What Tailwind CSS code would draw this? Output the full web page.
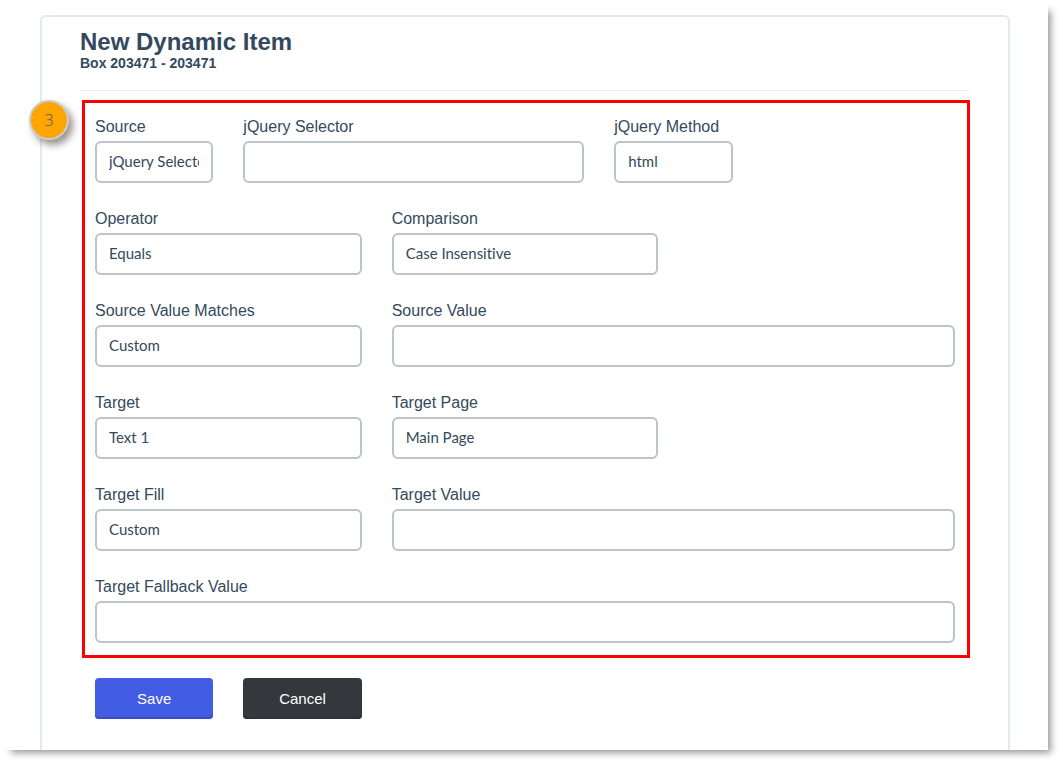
<!DOCTYPE html>
<html lang="en">
<head>
  <meta charset="UTF-8" />
  <meta name="viewport" content="width=device-width, initial-scale=1.0" />
  <title>New Dynamic Item</title>
  <script src="https://cdn.jsdelivr.net/npm/@tailwindcss/browser@4"></script>
</head>
<body class="bg-white min-h-screen flex pr-[15px] pb-[15px] text-[#34495e] font-['Liberation_Sans',Arial,sans-serif]">
  <main class="grow flex bg-white pt-[15px] pl-10 pr-[38px] shadow-[7px_7px_7px_-4px_rgba(0,0,0,0.4)]">
    <div class="grow border-2 border-b-0 border-[#e4e9e9] rounded-t-md px-[38px] pt-3 pb-6">

      <!-- Title -->
      <header class="border-b border-[#eceeee] pb-[18px]">
        <h1 class="text-2xl leading-[26px] font-bold">New Dynamic Item</h1>
        <h2 class="text-sm leading-[17px] font-bold">Box 203471 - 203471</h2>
      </header>

      <form>
        <div class="relative mt-[9px] ml-[2px] border-3 border-[#ff0000] py-3 pl-[10px] pr-3">
          <!-- Step number -->
          <span class="absolute -left-14 -top-[3px] size-10 rounded-full border-2 border-[#cccccc] bg-[#ffa500] flex items-center justify-center text-base font-light text-[#555555] font-['Open_Sans',sans-serif] shadow-[4px_5px_7px_rgba(60,40,40,0.5)]">3</span>

          <div class="grid grid-cols-12 gap-x-[30px] gap-y-6">
            <div class="col-span-2">
              <label for="source" class="block leading-6 mb-[2px]">Source</label>
              <select id="source" class="block appearance-none w-full h-[42px] px-3 pb-[2px] border-2 border-[#bdc3c7] rounded-md bg-white text-[15px] font-[Lato,sans-serif] [font-variant-ligatures:none]">
                <option>jQuery Selector</option>
              </select>
            </div>
            <div class="col-span-5">
              <label for="selector" class="block leading-6 mb-[2px]">jQuery Selector</label>
              <input type="text" id="selector" class="block w-full h-[42px] px-3 border-2 border-[#bdc3c7] rounded-md bg-white text-[15px] font-[Lato,sans-serif]" />
            </div>
            <div class="col-span-2">
              <label for="method" class="block leading-6 mb-[2px]">jQuery Method</label>
              <select id="method" class="block appearance-none w-full h-[42px] px-3 pb-[2px] border-2 border-[#bdc3c7] rounded-md bg-white text-[15px] font-[Lato,sans-serif] [font-variant-ligatures:none]">
                <option>html</option>
              </select>
            </div>

            <div class="col-span-4 col-start-1">
              <label for="operator" class="block leading-6 mb-[2px]">Operator</label>
              <select id="operator" class="block appearance-none w-full h-[42px] px-3 pb-[2px] border-2 border-[#bdc3c7] rounded-md bg-white text-[15px] font-[Lato,sans-serif] [font-variant-ligatures:none]">
                <option>Equals</option>
              </select>
            </div>
            <div class="col-span-4">
              <label for="comparison" class="block leading-6 mb-[2px]">Comparison</label>
              <select id="comparison" class="block appearance-none w-full h-[42px] px-3 pb-[2px] border-2 border-[#bdc3c7] rounded-md bg-white text-[15px] font-[Lato,sans-serif] [font-variant-ligatures:none]">
                <option>Case Insensitive</option>
              </select>
            </div>

            <div class="col-span-4 col-start-1">
              <label for="sourceMatches" class="block leading-6 mb-[2px]">Source Value Matches</label>
              <select id="sourceMatches" class="block appearance-none w-full h-[42px] px-3 pb-[2px] border-2 border-[#bdc3c7] rounded-md bg-white text-[15px] font-[Lato,sans-serif] [font-variant-ligatures:none]">
                <option>Custom</option>
              </select>
            </div>
            <div class="col-span-8">
              <label for="sourceValue" class="block leading-6 mb-[2px]">Source Value</label>
              <input type="text" id="sourceValue" class="block w-full h-[42px] px-3 border-2 border-[#bdc3c7] rounded-md bg-white text-[15px] font-[Lato,sans-serif]" />
            </div>

            <div class="col-span-4 col-start-1">
              <label for="target" class="block leading-6 mb-[2px]">Target</label>
              <select id="target" class="block appearance-none w-full h-[42px] px-3 pb-[2px] border-2 border-[#bdc3c7] rounded-md bg-white text-[15px] font-[Lato,sans-serif] [font-variant-ligatures:none]">
                <option>Text 1</option>
              </select>
            </div>
            <div class="col-span-4">
              <label for="targetPage" class="block leading-6 mb-[2px]">Target Page</label>
              <select id="targetPage" class="block appearance-none w-full h-[42px] px-3 pb-[2px] border-2 border-[#bdc3c7] rounded-md bg-white text-[15px] font-[Lato,sans-serif] [font-variant-ligatures:none]">
                <option>Main Page</option>
              </select>
            </div>

            <div class="col-span-4 col-start-1">
              <label for="targetFill" class="block leading-6 mb-[2px]">Target Fill</label>
              <select id="targetFill" class="block appearance-none w-full h-[42px] px-3 pb-[2px] border-2 border-[#bdc3c7] rounded-md bg-white text-[15px] font-[Lato,sans-serif] [font-variant-ligatures:none]">
                <option>Custom</option>
              </select>
            </div>
            <div class="col-span-8">
              <label for="targetValue" class="block leading-6 mb-[2px]">Target Value</label>
              <input type="text" id="targetValue" class="block w-full h-[42px] px-3 border-2 border-[#bdc3c7] rounded-md bg-white text-[15px] font-[Lato,sans-serif]" />
            </div>

            <div class="col-span-12">
              <label for="fallback" class="block leading-6 mb-[2px]">Target Fallback Value</label>
              <input type="text" id="fallback" class="block w-full h-[42px] px-3 border-2 border-[#bdc3c7] rounded-md bg-white text-[15px] font-[Lato,sans-serif]" />
            </div>
          </div>
        </div>

        <!-- Actions -->
        <div class="grid grid-cols-12 gap-x-[30px] px-[15px] mt-5">
          <button type="submit" class="col-span-2 h-[41px] pt-px rounded bg-[#425ce4] shadow-[inset_0_-2px_0_#3a4fc4] text-[15px] text-white cursor-pointer">Save</button>
          <button type="button" class="col-span-2 h-[41px] pt-px rounded bg-[#34383c] shadow-[inset_0_-2px_0_#2d3034] text-[15px] text-white cursor-pointer">Cancel</button>
        </div>
      </form>
    </div>
  </main>
</body>
</html>
